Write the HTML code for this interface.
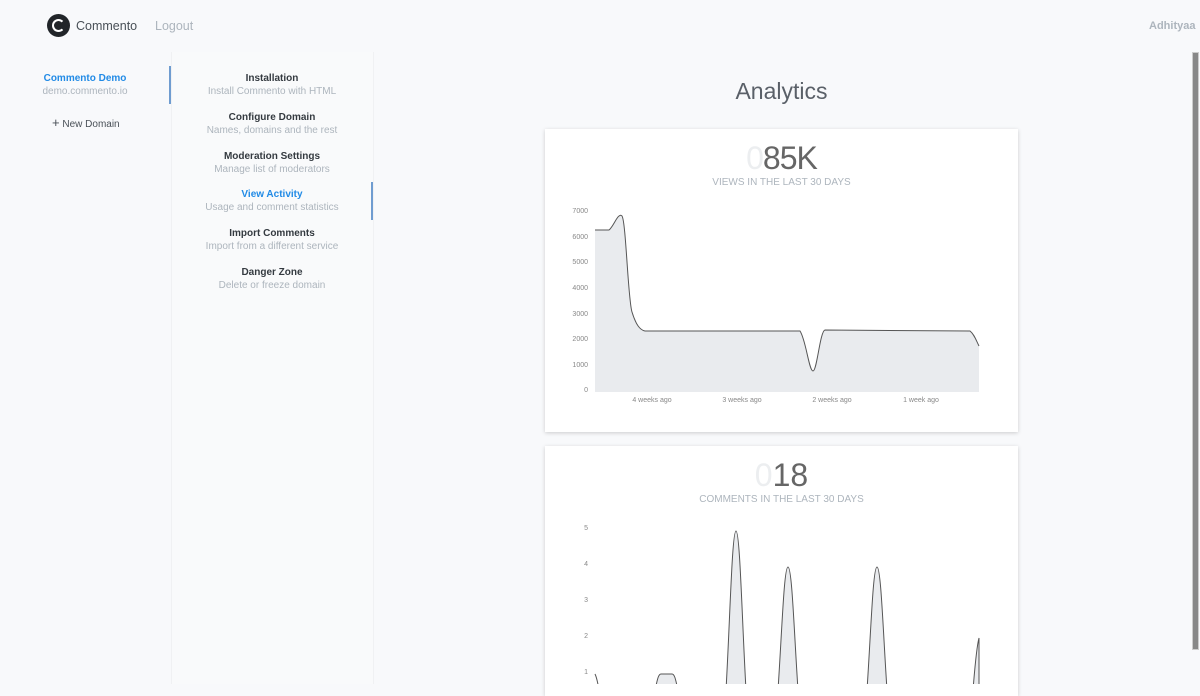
<!DOCTYPE html>
<html><head><meta charset="utf-8"><style>
body{margin:0;width:1200px;height:684px;overflow:hidden;background:#f8f9fb;font-family:"Liberation Sans",sans-serif;position:relative}
.a{position:absolute}
.c{text-align:center}
.t{font-size:10px;font-weight:bold;color:#343a40;line-height:12px}
.s{font-size:10px;color:#adb5bd;line-height:12px}
.card{position:absolute;left:545px;width:473px;background:#fff;box-shadow:0 1px 4px rgba(0,0,0,.18)}
</style></head><body>
<div class="a" style="left:47px;top:14px;width:23px;height:23px;border-radius:50%;background:#212529"></div>
<div class="a" style="left:52px;top:19px;width:9px;height:9px;border:2.5px solid #fff;border-right-color:transparent;border-radius:50%"></div>
<div class="a" style="left:76px;top:19px;font-size:12.5px;color:#495057">Commento</div>
<div class="a" style="left:155px;top:19px;font-size:12.5px;color:#adb5bd">Logout</div>
<div class="a" style="left:1149px;top:20px;font-size:11px;font-weight:bold;color:#adb5bd">Adhityaa</div>
<div class="a" style="left:1192px;top:52px;width:7px;height:598px;background:#888;border:1px solid #ccc;box-sizing:border-box"></div>

<div class="a c" style="left:0;width:170px;top:73px"><div class="t" style="color:#228be6">Commento Demo</div><div class="s" style="margin-top:1px">demo.commento.io</div></div>
<div class="a" style="left:169px;top:66px;width:2px;height:38px;background:#6f9cd0"></div>
<div class="a" style="left:52px;top:118px;font-size:10px;color:#495057"><span style="font-size:13px;line-height:10px">+</span> New Domain</div>

<div class="a" style="left:171px;top:52px;width:201px;height:632px;background:#f9fafb;border-left:1px solid #f0f1f3;border-right:1px solid #f0f1f3"></div>
<div class="a" style="left:371px;top:182px;width:2px;height:38px;background:#6f9cd0"></div>
<div class="a c" style="left:172px;width:200px;top:73px">
<div class="t">Installation</div><div class="s" style="margin-top:1px;height:25.8px">Install Commento with HTML</div>
<div class="t">Configure Domain</div><div class="s" style="margin-top:1px;height:25.8px">Names, domains and the rest</div>
<div class="t">Moderation Settings</div><div class="s" style="margin-top:1px;height:25.8px">Manage list of moderators</div>
<div class="t" style="color:#228be6">View Activity</div><div class="s" style="margin-top:1px;height:25.8px">Usage and comment statistics</div>
<div class="t">Import Comments</div><div class="s" style="margin-top:1px;height:25.8px">Import from a different service</div>
<div class="t">Danger Zone</div><div class="s" style="margin-top:1px;height:25.8px">Delete or freeze domain</div>
</div>

<div class="a c" style="left:545px;width:473px;top:78px;font-size:23px;color:#5a6068">Analytics</div>

<div class="card" style="top:129px;height:303px">
<div class="a c" style="left:0;width:473px;top:11px;font-size:32px;color:#666;letter-spacing:-1px"><span style="color:#eceef0">0</span>85K</div>
<div class="a c" style="left:0;width:473px;top:48px;font-size:10px;color:#adb5bd">VIEWS IN THE LAST 30 DAYS</div>
</div>
<div class="card" style="top:446px;height:250px">
<div class="a c" style="left:0;width:473px;top:11px;font-size:32px;color:#666"><span style="color:#eceef0">0</span>18</div>
<div class="a c" style="left:0;width:473px;top:48px;font-size:10px;color:#adb5bd">COMMENTS IN THE LAST 30 DAYS</div>
</div>

<svg class="a" style="left:0;top:0" width="1200" height="684" font-family="Liberation Sans" font-size="7" fill="#888">
<g text-anchor="end"><text x="588" y="213">7000</text><text x="588" y="239">6000</text><text x="588" y="264">5000</text><text x="588" y="290">4000</text><text x="588" y="316">3000</text><text x="588" y="341">2000</text><text x="588" y="367">1000</text><text x="588" y="392">0</text>
<text x="588" y="530">5</text><text x="588" y="566">4</text><text x="588" y="602">3</text><text x="588" y="638">2</text><text x="588" y="674">1</text></g>
<g text-anchor="middle"><text x="652" y="402">4 weeks ago</text><text x="742" y="402">3 weeks ago</text><text x="832" y="402">2 weeks ago</text><text x="921" y="402">1 week ago</text></g>
<path d="M595,230 L609,230 C614,226 618,212 622,216 C626,222 628,300 632,312 C636,325 640,330 645,331 L800,331 C806,340 809,371 813,371 C817,371 820,331 825,330 L970,331 C974,334 976,340 979,346 L979,392 L595,392 Z" fill="#e9ebee" stroke="none"/>
<path d="M595,230 L609,230 C614,226 618,212 622,216 C626,222 628,300 632,312 C636,325 640,330 645,331 L800,331 C806,340 809,371 813,371 C817,371 820,331 825,330 L970,331 C974,334 976,340 979,346" fill="none" stroke="#555" stroke-width="1"/>
<g fill="#e9ebee" stroke="#555" stroke-width="1">
<path d="M595,674 C597,678 598,684 599,690 M655,690 C657,682 658,674 661,674 L672,674 C675,674 676,682 678,690"/>
<path d="M726,690 C730,620 732,531 736,531 C740,531 742,620 746,690 Z"/>
<path d="M778,690 C782,630 784,567 788,567 C792,567 794,630 798,690 Z"/>
<path d="M867,690 C871,630 873,567 877,567 C881,567 883,630 887,690 Z"/>
<path d="M973,690 C975,665 977,645 979,638 L979,690"/>
</g>
</svg>
</body></html>
